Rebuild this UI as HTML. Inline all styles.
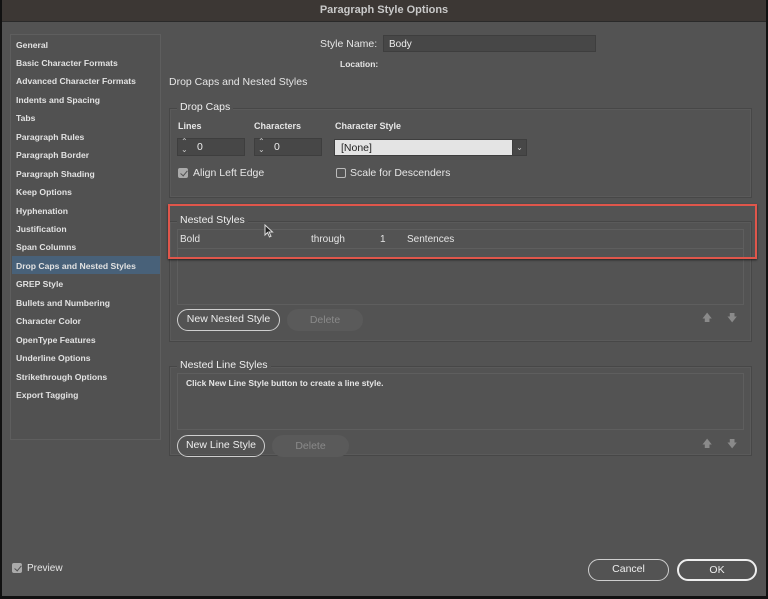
<!DOCTYPE html>
<html><head><style>
*{margin:0;padding:0;box-sizing:border-box}
body{width:768px;height:599px;background:#111;font-family:"Liberation Sans",sans-serif;overflow:hidden;position:relative}
.win{position:absolute;left:2px;top:0;width:764px;height:596px;background:#535353}
.title{position:absolute;left:0;top:0;width:764px;height:22px;background:#3c3734;color:#c9c9c9;font-weight:bold;font-size:11px;text-align:center;line-height:21px;border-bottom:1px solid #2a2a2a}
.a{position:absolute;color:#e6e6e6;font-size:9.5px;white-space:nowrap}
.b{font-weight:bold;font-size:9px}
.side{position:absolute;left:8px;top:34px;width:151px;height:406px;border:1px solid #5e5e5e;background:#515151}
.side div{position:absolute;left:5px;font-size:8.6px;font-weight:bold;color:#e2e2e2;white-space:nowrap}
.sel{position:absolute;left:1px;top:221px;width:148px;height:18px;background:#486179}
.grp{position:absolute;border:1px solid #474747;box-shadow:inset 0 0 0 1px #5a5a5a}
.lbl{position:absolute;background:#535353;padding:0 3px;color:#eee;font-size:10.5px}
.inp{position:absolute;background:#474747;border:1px solid #3e3e3e;color:#eee;font-size:10px;line-height:16px}
.btn{position:absolute;border:1.5px solid #cfcfcf;border-radius:11px;color:#eee;font-size:10.5px;text-align:center;line-height:19px}
.dis{position:absolute;background:#5a5a5a;border-radius:11px;color:#8a8a8a;font-size:10.5px;text-align:center;line-height:22px}
.cb{position:absolute;width:10px;height:10px;border:1px solid #bbb;border-radius:2px}
.cb.on{background:#aaa;border-color:#aaa}
.cb.on:after{content:"";position:absolute;left:2.5px;top:0px;width:3px;height:6px;border:solid #505050;border-width:0 1.5px 1.5px 0;transform:rotate(40deg)}
.arr{position:absolute;color:#8a8a8a;font-size:10px}
</style></head><body>
<div class="win">
<div class="title">Paragraph Style Options</div>
<div class="side">
<div style="top:5px">General</div>
<div style="top:23px">Basic Character Formats</div>
<div style="top:41px">Advanced Character Formats</div>
<div style="top:60px">Indents and Spacing</div>
<div style="top:78px">Tabs</div>
<div style="top:97px">Paragraph Rules</div>
<div style="top:115px">Paragraph Border</div>
<div style="top:134px">Paragraph Shading</div>
<div style="top:152px">Keep Options</div>
<div style="top:171px">Hyphenation</div>
<div style="top:189px">Justification</div>
<div style="top:207px">Span Columns</div>
<span class="sel"></span>
<div style="top:226px">Drop Caps and Nested Styles</div>
<div style="top:244px">GREP Style</div>
<div style="top:263px">Bullets and Numbering</div>
<div style="top:281px">Character Color</div>
<div style="top:300px">OpenType Features</div>
<div style="top:318px">Underline Options</div>
<div style="top:337px">Strikethrough Options</div>
<div style="top:355px">Export Tagging</div>
</div>

<div class="a" style="left:318px;top:38px;font-size:10.5px">Style Name:</div>
<div class="inp" style="left:381px;top:35px;width:213px;height:17px;padding-left:5px;line-height:17px">Body</div>
<div class="a b" style="left:338px;top:59px;font-size:8.5px">Location:</div>
<div class="a" style="left:167px;top:76px;font-size:10.5px">Drop Caps and Nested Styles</div>

<div class="grp" style="left:167px;top:108px;width:583px;height:90px"></div>
<div class="lbl" style="left:175px;top:101px">Drop Caps</div>
<div class="a b" style="left:176px;top:121px">Lines</div>
<div class="a b" style="left:252px;top:121px">Characters</div>
<div class="a b" style="left:333px;top:121px">Character Style</div>
<div class="inp" style="left:175px;top:138px;width:68px;height:18px;padding-left:19px;font-size:10.5px">0</div>
<div class="a" style="left:179px;top:138px;font-size:8px;line-height:8px;color:#ccc">⌃<br>⌄</div>
<div class="inp" style="left:252px;top:138px;width:68px;height:18px;padding-left:19px;font-size:10.5px">0</div>
<div class="a" style="left:256px;top:138px;font-size:8px;line-height:8px;color:#ccc">⌃<br>⌄</div>
<div class="inp" style="left:332px;top:139px;width:179px;height:17px;background:#e4e4e4;color:#222;padding-left:6px;font-size:10.5px">[None]</div>
<div class="inp" style="left:510px;top:139px;width:15px;height:17px;text-align:center;font-size:8px;color:#ccc">⌄</div>
<div class="cb on" style="left:176px;top:168px"></div>
<div class="a" style="left:191px;top:167px;font-size:10.5px">Align Left Edge</div>
<div class="cb" style="left:334px;top:168px"></div>
<div class="a" style="left:348px;top:167px;font-size:10.5px">Scale for Descenders</div>

<div class="grp" style="left:167px;top:221px;width:583px;height:121px"></div>
<div class="inp" style="left:175px;top:229px;width:567px;height:76px;background:#535353;border-color:#5e5e5e"></div>
<div style="position:absolute;left:176px;top:248px;width:565px;height:1px;background:#5e5e5e"></div>
<div class="lbl" style="left:175px;top:214px">Nested Styles</div>
<div class="a" style="left:178px;top:234px;font-size:10px">Bold</div>
<div class="a" style="left:309px;top:234px;font-size:10px">through</div>
<div class="a" style="left:378px;top:234px;font-size:10px">1</div>
<div class="a" style="left:405px;top:234px;font-size:10px">Sentences</div>
<div style="position:absolute;left:166px;top:204px;width:589px;height:55px;border:2px solid #e0564b;box-shadow:0 1px 2px #222"></div>
<svg style="position:absolute;left:262px;top:224px" width="10" height="14"><path d="M1 1 L1 11 L3.5 8.5 L5.5 13 L7 12.3 L5 8 L8.5 8 Z" fill="#222" stroke="#ddd" stroke-width="1"/></svg>
<div class="btn" style="left:175px;top:309px;width:103px;height:22px">New Nested Style</div>
<div class="dis" style="left:285px;top:309px;width:76px;height:22px">Delete</div>
<div class="arr" style="left:700px;top:311px">🡅</div>
<div class="arr" style="left:725px;top:311px">🡇</div>

<div class="grp" style="left:167px;top:366px;width:583px;height:90px"></div>
<div class="lbl" style="left:175px;top:359px">Nested Line Styles</div>
<div class="inp" style="left:175px;top:373px;width:567px;height:57px;background:#535353;border-color:#5e5e5e"></div>
<div class="a b" style="left:184px;top:378px;font-size:8.5px">Click New Line Style button to create a line style.</div>
<div class="btn" style="left:175px;top:435px;width:88px;height:22px">New Line Style</div>
<div class="dis" style="left:270px;top:435px;width:77px;height:22px">Delete</div>
<div class="arr" style="left:700px;top:437px">🡅</div>
<div class="arr" style="left:725px;top:437px">🡇</div>

<div class="cb on" style="left:10px;top:563px"></div>
<div class="a" style="left:25px;top:563px;font-size:10px">Preview</div>
<div class="btn" style="left:586px;top:559px;width:81px;height:22px;line-height:19px">Cancel</div>
<div class="btn" style="left:675px;top:559px;width:80px;height:22px;border:2px solid #eee;line-height:18px">OK</div>
</div>
</body></html>
